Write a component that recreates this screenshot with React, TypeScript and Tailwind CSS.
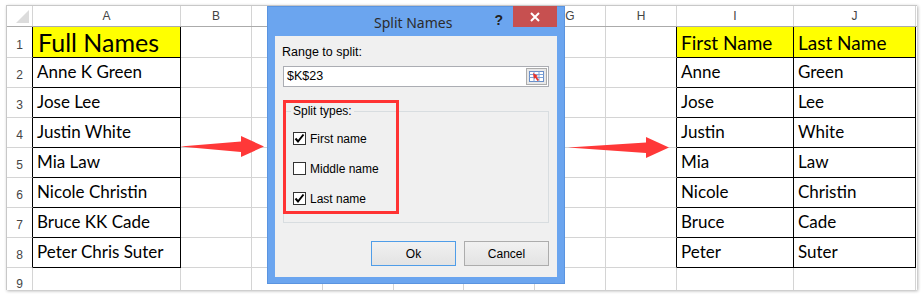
import React from "react";

// C-F sit under the dialog, so their letters are never seen
const COLS = ["A", "B", "", "", "", "", "G", "H", "I", "J"];
const COL_W = ["w-[148px]", "w-[71px]", "w-[71px]", "w-[71px]", "w-[70px]", "w-[71px]", "w-[71px]", "w-[71px]", "w-[117px]", "w-[122px]"];

const rows: [string, string, string][] = [
    ["Full Names", "First Name", "Last Name"],
    ["Anne K Green", "Anne", "Green"],
    ["Jose Lee", "Jose", "Lee"],
    ["Justin White", "Justin", "White"],
    ["Mia Law", "Mia", "Law"],
    ["Nicole Christin", "Nicole", "Christin"],
    ["Bruce KK Cade", "Bruce", "Cade"],
    ["Peter Chris Suter", "Peter", "Suter"],
];

const cellFont = { fontFamily: "Lato, 'Noto Sans', sans-serif" };
const uiFont = { fontFamily: "'Liberation Sans', Arial, sans-serif" };

function Arrow({ x, y, len }: { x: number; y: number; len: number }) {
    const head = 23;
    const w = len;
    return (
        <svg className="absolute" style={{ left: x, top: y - 11 }} width={w} height={22} viewBox={`0 0 ${w} 22`}>
            <polygon
                points={`0,10.5 ${w - head},5.5 ${w - head},0 ${w},10.5 ${w - head},21 ${w - head},16`}
                fill="#ff3838"
            />
        </svg>
    );
}

function CheckBox({ checked }: { checked: boolean }) {
    return (
        <div className="w-[13px] h-[13px] border border-[#333] bg-white flex items-center justify-center">
            {checked && (
                <svg width="11" height="11" viewBox="0 0 11 11">
                    <path d="M1.5 5.5 L4 8.5 L9.5 1.5" stroke="#000" strokeWidth="2" fill="none" />
                </svg>
            )}
        </div>
    );
}

function Sheet() {
    return (
        <div className="ml-[6px] mt-[5px] w-[911px] h-[285px] bg-white border-t border-l border-[#c8c8c8] shadow-[1px_1px_3px_rgba(0,0,0,0.3)] overflow-hidden">
            {/* column header */}
            <div className="flex h-[21px] border-b border-[#ababab]">
                <div className="w-[26px] border-r border-[#d4d4d4] relative shrink-0">
                    <div className="absolute right-[3px] bottom-[3px] w-0 h-0 border-l-[13px] border-l-transparent border-b-[13px] border-b-[#dcdcdc]" />
                </div>
                {COLS.map((c, i) => (
                    <div
                        key={i}
                        className={`${COL_W[i]} shrink-0 border-r border-[#d4d4d4] flex items-center justify-center text-[12px] text-[#444]`}
                        style={uiFont}
                    >
                        {c}
                    </div>
                ))}
            </div>
            {rows.map((r, ri) => {
                const head = ri === 0;
                const txt = head ? "" : "text-[17px] leading-[26px] pb-[2px]";
                return (
                    <div key={ri} className={`flex ${head ? "h-[31px]" : "h-[30px]"}`}>
                        <div className="w-[26px] shrink-0 border-r border-b border-r-black border-b-[#d4d4d4] flex items-end justify-center pb-[3px] text-[12px] text-[#444]" style={uiFont}>
                            {ri + 1}
                        </div>
                        <div
                            className={`w-[148px] shrink-0 border-r border-b border-black flex items-end pl-[4px] ${head ? "bg-[#ffff00] text-[25px] leading-[30px] pl-[5px]" : txt} text-black`}
                            style={cellFont}
                        >
                            {r[0]}
                        </div>
                        {COL_W.slice(1, 8).map((w, k) => (
                            <div key={k} className={`${w} shrink-0 border-r border-b border-[#d4d4d4] ${k === 6 ? "border-r-black" : ""}`} />
                        ))}
                        <div
                            className={`w-[117px] shrink-0 border-r border-b border-black flex items-end pl-[4px] ${head ? "bg-[#ffff00] text-[19px] leading-[28px]" : txt} text-black`}
                            style={cellFont}
                        >
                            {r[1]}
                        </div>
                        <div
                            className={`w-[122px] shrink-0 border-r border-b border-black flex items-end pl-[4px] ${head ? "bg-[#ffff00] text-[19px] leading-[28px]" : txt} text-black`}
                            style={cellFont}
                        >
                            {r[2]}
                        </div>
                    </div>
                );
            })}
            {/* row 9 */}
            <div className="flex h-[23px]">
                <div className="w-[26px] shrink-0 border-r border-[#d4d4d4] flex items-end justify-center text-[12px] text-[#444] leading-[14px]" style={uiFont}>
                    9
                </div>
                {COL_W.map((w, i) => (
                    <div key={i} className={`${w} shrink-0 border-r border-[#d4d4d4]`} />
                ))}
            </div>
        </div>
    );
}

function Dialog() {
    return (
        <div className="absolute left-[267px] top-[6px] w-[298px] h-[278px] bg-[#6ba5ef] border border-[#5a94e0] flex flex-col px-[7px] pb-[6px]" style={uiFont}>
            {/* title bar */}
            <div className="h-[29px] relative flex items-center shrink-0">
                <span className="ml-[99px] text-[14px] text-[#2b2b2b] pt-[2px] leading-[20px]" style={{ fontFamily: "'Noto Sans', sans-serif" }}>
                    Split Names
                </span>
                <span className="absolute right-[54px] top-[5px] text-[14px] font-bold text-[#222] leading-[16px]">?</span>
                <div className="absolute right-0 -top-px w-[44px] h-[21px] bg-[#c75050] flex items-center justify-center">
                    <svg width="10" height="10" viewBox="0 0 10 10">
                        <path d="M1 1 L9 9 M9 1 L1 9" stroke="#fff" strokeWidth="2" />
                    </svg>
                </div>
            </div>

            {/* body */}
            <div className="flex-1 bg-[#f0f0f0] relative flex flex-col px-[8px]">
                <div className="text-[12.5px] text-black mt-[9px] -ml-px leading-[15px]">Range to split:</div>
                <div className="mt-[6px] h-[21px] border border-[#abadb3] bg-white flex items-center justify-between pl-[3px] pr-[1px]">
                    <span className="text-[12.5px] text-black">$K$23</span>
                    <div className="w-[21px] h-[17px] border border-[#acacac] bg-[#e8e8e8] flex items-center justify-center">
                        <svg width="15" height="11" viewBox="0 0 15 11">
                            <rect x="0.5" y="0.5" width="14" height="10" fill="#fff" stroke="#6a8fc8" />
                            <path d="M0.5 3.5 H14.5 M0.5 6.5 H14.5 M5 0.5 V10.5 M10 0.5 V10.5" stroke="#7ea4d8" strokeWidth="1" />
                            <polygon points="4,2 9,5 7.5,5.8 10,9 8.5,10 6.2,6.8 5,8" fill="#e8322a" />
                        </svg>
                    </div>
                </div>

                <div className="mt-[24px] h-[112px] border border-[#d8dde0] relative flex flex-col gap-[17px] pt-[20px] pl-[9px]">
                    <span className="absolute -top-[8px] left-[7px] bg-[#f0f0f0] px-[2px] text-[12px] text-black leading-[15px]">Split types:</span>
                    {[
                        ["First name", true],
                        ["Middle name", false],
                        ["Last name", true],
                    ].map(([label, on]) => (
                        <div key={label as string} className="flex items-center gap-[4px] h-[13px]">
                            <CheckBox checked={on as boolean} />
                            <span className="text-[12px] text-black">{label as string}</span>
                        </div>
                    ))}
                </div>

                <div className="mt-[18px] flex justify-end gap-[8px]">
                    <button className="w-[85px] h-[25px] border border-[#4f9de8] bg-gradient-to-b from-[#f1f1f1] to-[#e3e3e3] text-[12px] text-black">
                        Ok
                    </button>
                    <button className="w-[85px] h-[25px] border border-[#acacac] bg-gradient-to-b from-[#f1f1f1] to-[#e3e3e3] text-[12px] text-black">
                        Cancel
                    </button>
                </div>

                {/* annotation */}
                <div className="absolute left-[8px] top-[64px] w-[116px] h-[114px] border-[3px] border-[#ff3333] pointer-events-none" />
            </div>
        </div>
    );
}

export default function App() {
    return (
        <div className="relative w-[923px] h-[294px] bg-white overflow-hidden">
            <Sheet />
            <Arrow x={180} y={147} len={84} />
            <Arrow x={568} y={148} len={101} />
            <Dialog />
        </div>
    );
}
